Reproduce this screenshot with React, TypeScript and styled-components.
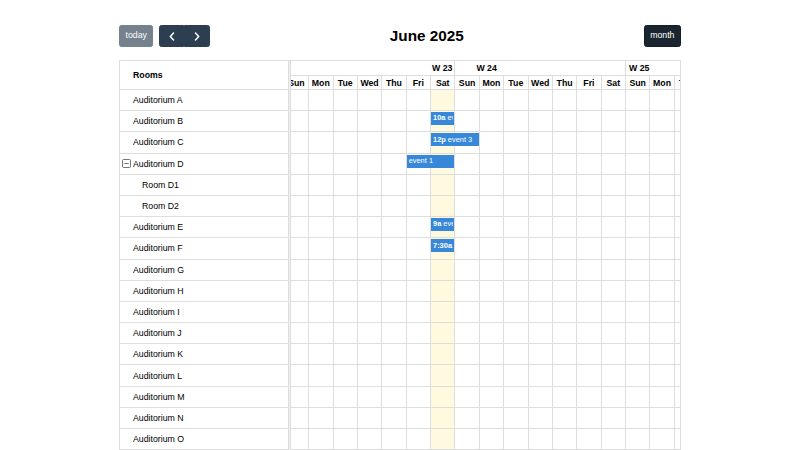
import React from 'react';
import styled, { createGlobalStyle } from 'styled-components';

const COL = 24.375;
const SCROLL = 6.25;
const ROW_H = 21.2;
const BORDER = '#dddddd';

const GlobalStyle = createGlobalStyle`
  html, body { margin: 0; padding: 0; overflow: hidden; background: #fff; }
  body {
    font-family: "Liberation Sans", Arial, sans-serif;
    font-size: 8.75px;
    color: #000;
  }
  * { box-sizing: border-box; }
`;

const Page = styled.div`
  width: 562px;
  margin: 0 auto;
  padding-top: 25px;
`;

const Toolbar = styled.div`
  display: flex;
  justify-content: space-between;
  align-items: center;
  height: 22px;
  margin-bottom: 13px;
`;

const ToolGroup = styled.div`
  display: flex;
  align-items: center;
  gap: 5.5px;
`;

const ButtonGroup = styled.div`
  display: flex;
`;

const Button = styled.button<{ $variant?: 'disabled' | 'normal' | 'active'; $pos?: 'left' | 'right' | 'solo' }>`
  font-family: inherit;
  font-size: 8.75px;
  line-height: 1.5;
  height: 22px;
  padding: 0 5.5px;
  display: inline-flex;
  align-items: center;
  justify-content: center;
  color: #fff;
  border: 1px solid ${(p) => (p.$variant === 'active' ? '#151e27' : '#2c3e50')};
  background: ${(p) => (p.$variant === 'active' ? '#1a252f' : '#2c3e50')};
  opacity: ${(p) => (p.$variant === 'disabled' ? 0.65 : 1)};
  border-radius: ${(p) => (p.$pos === 'left' ? '2.5px 0 0 2.5px' : p.$pos === 'right' ? '0 2.5px 2.5px 0' : '2.5px')};
  width: ${(p) => (p.$pos === 'left' || p.$pos === 'right' ? '25.5px' : 'auto')};
`;

const Title = styled.h2`
  margin: 0;
  font-size: 15.3px;
  font-weight: bold;
  line-height: 1.2;
`;

const Calendar = styled.div`
  display: flex;
  border: 1px solid ${BORDER};
  border-bottom: none;
`;

const ResourceArea = styled.div`
  width: 168px;
  flex: none;
`;

const ResourceHeader = styled.div`
  height: 29px;
  border-bottom: 1px solid ${BORDER};
  display: flex;
  align-items: center;
  padding-left: 13px;
  font-weight: bold;
`;

const ResourceRow = styled.div<{ $level: number }>`
  height: ${ROW_H}px;
  border-bottom: 1px solid ${BORDER};
  display: flex;
  align-items: center;
  padding-left: ${(p) => 2 + p.$level * 9}px;
  white-space: nowrap;
`;

const Expander = styled.span`
  width: 11px;
  flex: none;
  display: flex;
  align-items: center;
`;

const Divider = styled.div`
  width: 3px;
  flex: none;
  background: #f0f0f0;
  border-left: 1px solid ${BORDER};
  border-right: 1px solid ${BORDER};
`;

const Timeline = styled.div`
  flex: 1;
  overflow: hidden;
`;

const TimelineInner = styled.div<{ $width: number }>`
  width: ${(p) => p.$width}px;
  margin-left: -${SCROLL}px;
`;

const HeaderRow = styled.div<{ $h: number }>`
  display: flex;
  height: ${(p) => p.$h}px;
  border-bottom: 1px solid ${BORDER};
`;

const WeekCell = styled.div<{ $span: number; $offset: number; $right?: boolean }>`
  width: ${(p) => p.$span * COL}px;
  flex: none;
  border-right: 1px solid ${BORDER};
  display: flex;
  align-items: center;
  justify-content: ${(p) => (p.$right ? 'flex-end' : 'flex-start')};
  padding: ${(p) => (p.$right ? `0 ${p.$offset}px 0 0` : `0 0 0 ${p.$offset}px`)};
  font-weight: bold;
  white-space: nowrap;
`;

const DayHeadCell = styled.div`
  width: ${COL}px;
  flex: none;
  border-right: 1px solid ${BORDER};
  display: flex;
  align-items: center;
  justify-content: center;
  font-weight: bold;
  white-space: nowrap;
  overflow: hidden;
`;

const BodyRow = styled.div`
  display: flex;
  height: ${ROW_H}px;
  border-bottom: 1px solid ${BORDER};
  position: relative;
`;

const DayCell = styled.div<{ $today?: boolean }>`
  width: ${COL}px;
  flex: none;
  border-right: 1px solid ${BORDER};
  background: ${(p) => (p.$today ? 'rgba(255, 220, 40, 0.15)' : 'transparent')};
`;

const Event = styled.div`
  position: absolute;
  top: 1px;
  height: 13px;
  background: #3788d8;
  border: 1px solid #3788d8;
  color: #fff;
  font-size: 7.44px;
  line-height: 1.15;
  padding: 1.3px 1px;
  white-space: nowrap;
  overflow: hidden;
  display: flex;
  align-items: center;
`;

const EventTime = styled.span`
  font-weight: bold;
  margin-right: 2px;
`;

const EventTitle = styled.span``;

const DAYS = ['Sun', 'Mon', 'Tue', 'Wed', 'Thu', 'Fri', 'Sat'];
const NUM_DAYS = 17;
const TODAY = 6;

const WEEKS = [
  { label: 'W 23', span: 7, offset: 2, right: true },
  { label: 'W 24', span: 7, offset: 21 },
  { label: 'W 25', span: 3, offset: 3 },
];

type Res = { name: string; level: number; expander?: boolean };
const RESOURCES: Res[] = [
  { name: 'Auditorium A', level: 0 },
  { name: 'Auditorium B', level: 0 },
  { name: 'Auditorium C', level: 0 },
  { name: 'Auditorium D', level: 0, expander: true },
  { name: 'Room D1', level: 1 },
  { name: 'Room D2', level: 1 },
  { name: 'Auditorium E', level: 0 },
  { name: 'Auditorium F', level: 0 },
  { name: 'Auditorium G', level: 0 },
  { name: 'Auditorium H', level: 0 },
  { name: 'Auditorium I', level: 0 },
  { name: 'Auditorium J', level: 0 },
  { name: 'Auditorium K', level: 0 },
  { name: 'Auditorium L', level: 0 },
  { name: 'Auditorium M', level: 0 },
  { name: 'Auditorium N', level: 0 },
  { name: 'Auditorium O', level: 0 },
];

type Ev = { row: number; start: number; span: number; time?: string; title: string };
const EVENTS: Ev[] = [
  { row: 1, start: 6, span: 1, time: '10a', title: 'event 2' },
  { row: 2, start: 6, span: 2, time: '12p', title: 'event 3' },
  { row: 3, start: 5, span: 2, title: 'event 1' },
  { row: 6, start: 6, span: 1, time: '9a', title: 'event 5' },
  { row: 7, start: 6, span: 1, time: '7:30a', title: 'event 6' },
];

const ChevronLeft = () => (
  <svg width="8" height="9" viewBox="0 0 8 9">
    <polyline points="5.5,1 2.3,4.5 5.5,8" fill="none" stroke="#fff" strokeWidth="1.5" strokeLinecap="round" strokeLinejoin="round" />
  </svg>
);

const ChevronRight = () => (
  <svg width="8" height="9" viewBox="0 0 8 9">
    <polyline points="2.5,1 5.7,4.5 2.5,8" fill="none" stroke="#fff" strokeWidth="1.5" strokeLinecap="round" strokeLinejoin="round" />
  </svg>
);

const MinusSquare = () => (
  <svg width="9" height="9" viewBox="0 0 9 9">
    <rect x="0.5" y="0.5" width="8" height="8" rx="1" fill="none" stroke="#666" strokeWidth="0.9" />
    <line x1="2.3" y1="4.5" x2="6.7" y2="4.5" stroke="#666" strokeWidth="0.9" />
  </svg>
);

export default function App() {
  const days = Array.from({ length: NUM_DAYS }, (_, i) => i);
  return (
    <>
      <GlobalStyle />
      <Page>
        <Toolbar>
          <ToolGroup>
            <Button $variant="disabled">today</Button>
            <ButtonGroup>
              <Button $pos="left" aria-label="prev">
                <ChevronLeft />
              </Button>
              <Button $pos="right" aria-label="next">
                <ChevronRight />
              </Button>
            </ButtonGroup>
          </ToolGroup>
          <Title>June 2025</Title>
          <ToolGroup>
            <Button $variant="active">month</Button>
          </ToolGroup>
        </Toolbar>

        <Calendar>
          <ResourceArea>
            <ResourceHeader>Rooms</ResourceHeader>
            {RESOURCES.map((r) => (
              <ResourceRow key={r.name} $level={r.level}>
                <Expander>{r.expander && <MinusSquare />}</Expander>
                {r.name}
              </ResourceRow>
            ))}
          </ResourceArea>
          <Divider />
          <Timeline>
            <TimelineInner $width={NUM_DAYS * COL}>
              <HeaderRow $h={15}>
                {WEEKS.map((w) => (
                  <WeekCell key={w.label} $span={w.span} $offset={w.offset} $right={w.right}>
                    {w.label}
                  </WeekCell>
                ))}
              </HeaderRow>
              <HeaderRow $h={14}>
                {days.map((d) => (
                  <DayHeadCell key={d}>{DAYS[d % 7]}</DayHeadCell>
                ))}
              </HeaderRow>
              {RESOURCES.map((r, ri) => (
                <BodyRow key={r.name}>
                  {days.map((d) => (
                    <DayCell key={d} $today={d === TODAY} />
                  ))}
                  {EVENTS.filter((e) => e.row === ri).map((e) => (
                    <Event key={e.title} style={{ left: e.start * COL, width: e.span * COL - 1 }}>
                      {e.time && <EventTime>{e.time}</EventTime>}
                      <EventTitle>{e.title}</EventTitle>
                    </Event>
                  ))}
                </BodyRow>
              ))}
            </TimelineInner>
          </Timeline>
        </Calendar>
      </Page>
    </>
  );
}
